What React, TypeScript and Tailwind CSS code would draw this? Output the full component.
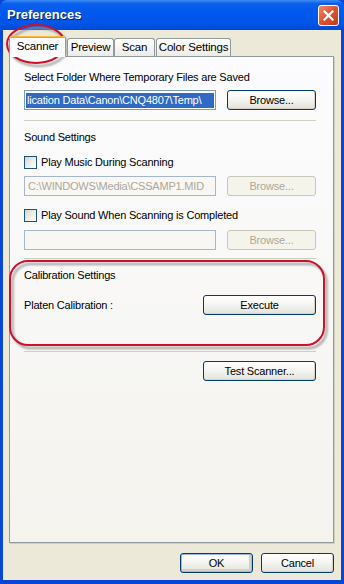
import React from "react";

const btn =
  "flex items-center justify-center h-[20px] rounded-[3px] border border-[#003C74] bg-gradient-to-b from-white via-[#F4F4F0] to-[#E3E2DA] text-black shadow-[inset_-1px_-1px_0_#D6D0C5]";
const btnOff =
  "flex items-center justify-center h-[20px] rounded-[3px] border border-[#C9C7BA] bg-[#F5F4EA] text-[#ACA899]";

const Checkbox = () => (
  <span className="block w-[13px] h-[13px] border border-[#1C5180] bg-gradient-to-br from-[#D4D4CD] via-[#EDEDE8] to-white" />
);

const Separator = ({ className }: { className: string }) => (
  <div className={`h-px bg-[#D0D0BF] ${className}`} />
);

const tabs = [
  { label: "Preview", w: "w-[47px]", ml: "ml-[1px]" },
  { label: "Scan", w: "w-[41px]", ml: "ml-0" },
  { label: "Color Settings", w: "w-[75px]", ml: "ml-[1px]" },
];

export default function App() {
  return (
    <div className="relative w-[344px] h-[584px] flex flex-col bg-[#0846D8] font-['Liberation_Sans',Arial,sans-serif] text-[11px] tracking-[-0.2px] text-black select-none overflow-hidden">
      {/* Title bar */}
      <div className="h-[30px] flex items-center justify-between pl-[7px] pr-[5px] bg-[linear-gradient(to_bottom,#3D8DF5_0%,#0A5FEC_12%,#0058EE_45%,#0055E5_80%,#0049D9_100%)] rounded-t-[7px]">
        <span className="text-white font-bold text-[13px] tracking-normal [text-shadow:1px_1px_0_#0A1E6E]">
          Preferences
        </span>
        <div className="w-[21px] h-[21px] rounded-[3px] border border-white bg-gradient-to-br from-[#F0866B] via-[#E0512E] to-[#C2391A] flex items-center justify-center">
          <svg width="11" height="11" viewBox="0 0 11 11">
            <path d="M1.5 1.5 L9.5 9.5 M9.5 1.5 L1.5 9.5" stroke="white" strokeWidth="2.2" strokeLinecap="square" />
          </svg>
        </div>
      </div>

      {/* Body */}
      <div className="flex-1 flex flex-col mx-[3px] mb-[4px] bg-[#ECE9D8] pt-[6px] pl-[6px] pr-[7px] pb-[7px]">
        {/* Tabs */}
        <div className="h-[20px] flex items-end relative z-10">
          <div className="w-[57px] h-[21px] -mb-px flex flex-col rounded-t-[3px] border-x border-[#919B9C] bg-[#FCFCFE] overflow-hidden">
            <div className="h-[3px] bg-gradient-to-b from-[#FFC83C] to-[#E68B2C]" />
            <div className="flex-1 flex items-center justify-center pb-[2px] text-[11.5px]">Scanner</div>
          </div>
          {tabs.map((t) => (
            <div
              key={t.label}
              className={`${t.w} ${t.ml} h-[18px] flex items-center justify-center rounded-t-[3px] border border-b-0 border-[#919B9C] bg-gradient-to-b from-white to-[#ECEBE6] whitespace-nowrap`}
            >
              <span className="text-[11.5px]">{t.label}</span>
            </div>
          ))}
        </div>

        {/* Panel */}
        <div className="flex-1 flex flex-col border border-[#919B9C] bg-gradient-to-b from-[#FCFCFE] to-[#F4F3EE] shadow-[1px_1px_0_#D0CEBF] pl-[14px] pr-[17px] pt-[13px]">
          <div className="h-[14px] leading-[14px]">Select Folder Where Temporary Files are Saved</div>
          <div className="mt-[6px] flex justify-between">
            <div className="w-[192px] h-[20px] border border-[#7F9DB9] bg-white flex items-center px-[1px] overflow-hidden">
              <span className="bg-[#316AC5] text-white whitespace-nowrap h-[15px] leading-[15px] px-[1px] w-full overflow-hidden">
                lication Data\Canon\CNQ4807\Temp\
              </span>
            </div>
            <div className={`${btn} w-[89px]`}>Browse...</div>
          </div>

          <Separator className="mt-[10px]" />

          <div className="mt-[9px] h-[14px] leading-[14px]">Sound Settings</div>
          <div className="mt-[11px] h-[14px] flex items-center gap-[4px]">
            <Checkbox />
            <span className="leading-[14px]">Play Music During Scanning</span>
          </div>
          <div className="mt-[7px] flex justify-between">
            <div className="w-[192px] h-[20px] border border-[#A5B6C8] bg-[#F8F7F3] flex items-center px-[3px] text-[#ACA899] whitespace-nowrap overflow-hidden">
              C:\WINDOWS\Media\CSSAMP1.MID
            </div>
            <div className={`${btnOff} w-[89px]`}>Browse...</div>
          </div>
          <div className="mt-[12px] h-[14px] flex items-center gap-[4px]">
            <Checkbox />
            <span className="leading-[14px]">Play Sound When Scanning is Completed</span>
          </div>
          <div className="mt-[8px] flex justify-between">
            <div className="w-[192px] h-[20px] border border-[#A5B6C8] bg-[#F8F7F3]" />
            <div className={`${btnOff} w-[89px]`}>Browse...</div>
          </div>

          <Separator className="mt-[8px]" />

          <div className="mt-[9px] h-[14px] leading-[14px]">Calibration Settings</div>
          <div className="mt-[13px] flex items-center justify-between">
            <span>Platen Calibration :</span>
            <div className={`${btn} w-[113px]`}>Execute</div>
          </div>

          <Separator className="mt-[36px]" />

          <div className="mt-[9px] flex justify-end">
            <div className={`${btn} w-[113px]`}>Test Scanner...</div>
          </div>
        </div>

        {/* Dialog buttons */}
        <div className="mt-[10px] flex justify-end gap-[8px]">
          <div className={`${btn} w-[73px] shadow-[inset_0_0_0_1px_#97B8F0,inset_-1px_-1px_0_2px_#D6D0C5]`}>OK</div>
          <div className={`${btn} w-[73px]`}>Cancel</div>
        </div>
      </div>

      {/* Red annotation marks */}
      <svg className="absolute inset-0 pointer-events-none" width="344" height="584">
        <defs>
          <filter id="sh" x="-10%" y="-10%" width="120%" height="130%">
            <feGaussianBlur stdDeviation="1.2" />
          </filter>
        </defs>
        <ellipse cx="37" cy="45" rx="29" ry="19" fill="none" stroke="#9A9A9A" strokeWidth="2" filter="url(#sh)" transform="translate(1.5 2)" />
        <ellipse cx="36" cy="44" rx="29" ry="19" fill="none" stroke="#D0102A" strokeWidth="2" />
        <rect x="11" y="262" width="314" height="84" rx="18" fill="none" stroke="#9A9A9A" strokeWidth="2" filter="url(#sh)" transform="translate(1.5 2)" />
        <rect x="10" y="261" width="314" height="84" rx="18" fill="none" stroke="#D0102A" strokeWidth="2" />
      </svg>
    </div>
  );
}
